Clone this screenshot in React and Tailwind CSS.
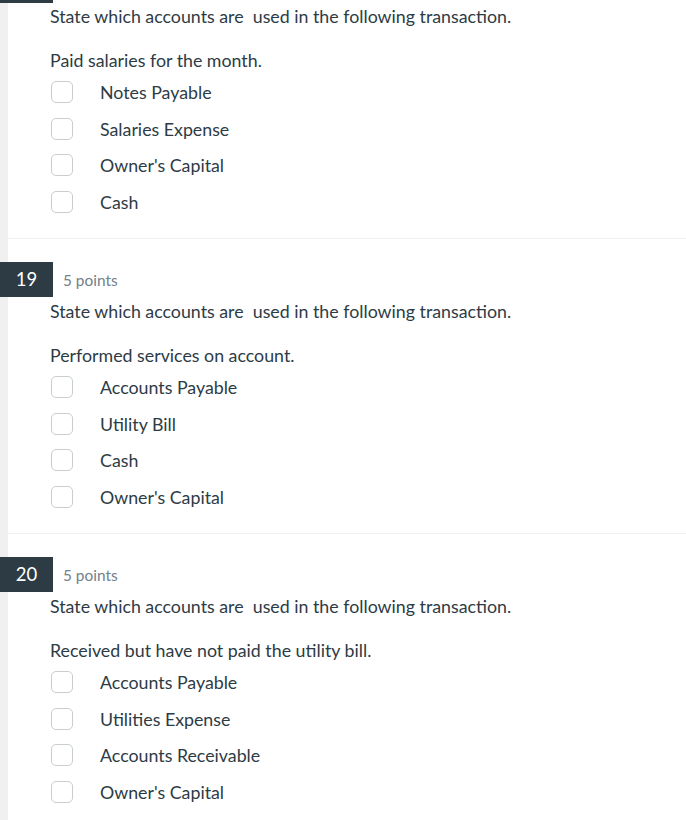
import React from "react";

const Q = "State which accounts are\u00a0 used in the following transaction.";

function Option({ label }) {
  return (
    <div className="flex h-[36.5px] items-center">
      <span className="ml-[1px] h-[22px] w-[22px] shrink-0 rounded-[5px] border border-[#c7cdd1] bg-white" />
      <span className="ml-[27px] text-[17.8px] leading-6 text-[#2d3b45]">{label}</span>
    </div>
  );
}

function Body({ prompt, options }) {
  return (
    <div className="pl-[50px]">
      <p className="text-[17.8px] leading-6 text-[#2d3b45]">{Q}</p>
      <p className="mt-5 text-[17.8px] leading-6 text-[#2d3b45]">{prompt}</p>
      <div className="mt-[2px]">
        {options.map((o) => (
          <Option key={o} label={o} />
        ))}
      </div>
    </div>
  );
}

function Question({ num, prompt, options, last }) {
  return (
    <div>
      <div className="ml-2 h-px bg-[#f0f0f0]" />
      <div className="mt-[23px] flex items-center">
        <div className="flex h-[35px] w-[53px] items-center justify-center bg-[#2d3b45] text-[18.5px] text-white">
          {num}
        </div>
        <span className="ml-[10px] mt-[3px] text-[15.4px] text-[#73818b]">5 points</span>
      </div>
      <div className="mt-[2px]">
        <Body prompt={prompt} options={options} />
      </div>
      {!last && <div className="h-[18px]" />}
    </div>
  );
}

export default function App() {
  return (
    <div
      className="min-h-[820px] w-full bg-[linear-gradient(to_right,#f0f0f0_8px,#ffffff_8px)]"
      style={{ fontFamily: "Lato, 'Open Sans', sans-serif" }}
    >
      <div className="h-[3px] w-[53px] bg-[#2d3b45]" />
      <div className="mt-[1px]">
        <Body
          prompt="Paid salaries for the month."
          options={["Notes Payable", "Salaries Expense", "Owner's Capital", "Cash"]}
        />
      </div>
      <div className="h-[18px]" />
      <Question
        num="19"
        prompt="Performed services on account."
        options={["Accounts Payable", "Utility Bill", "Cash", "Owner's Capital"]}
      />
      <Question
        num="20"
        prompt="Received but have not paid the utility bill."
        options={["Accounts Payable", "Utilities Expense", "Accounts Receivable", "Owner's Capital"]}
        last
      />
    </div>
  );
}
